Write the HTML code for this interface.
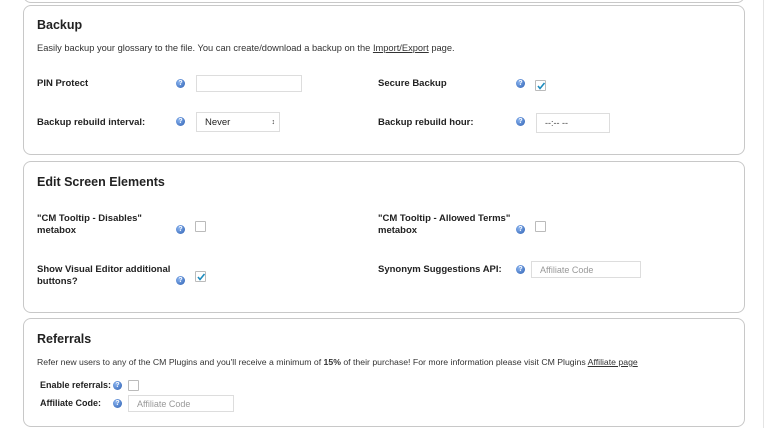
<!DOCTYPE html>
<html><head><style>
body{margin:0;width:768px;height:428px;background:#fff;font-family:"Liberation Sans",Arial,sans-serif;color:#222;position:relative;overflow:hidden}
.p{position:absolute;left:23px;width:722px;background:#fff;border:1px solid #c8c8c8;border-radius:8px;box-sizing:border-box}
.a{position:absolute;white-space:nowrap}
h3{position:absolute;margin:0;font-size:12.5px;font-weight:bold;left:13px}
.l{font-size:9.5px;font-weight:bold}
.t{font-size:9.3px;color:#333}
.q{position:absolute;width:9px;height:9px;border-radius:50%;background:radial-gradient(circle at 35% 35%,#8ab4f0,#2a5db0);color:#fff;font-size:7px;font-weight:bold;text-align:center;line-height:9px}
.in{position:absolute;border:1px solid #ddd;background:#fff;box-sizing:border-box;font-size:9px;color:#999;padding-left:8px;line-height:17px}
.cb{position:absolute;width:11px;height:11px;border:1px solid #bbb;background:#fff;box-sizing:border-box;border-radius:1px}
u{text-decoration:underline}
</style></head><body>
<div style="position:absolute;left:763px;top:0;width:1px;height:428px;background:#e4e4e4"></div>
<div class="p" style="top:-20px;height:23px"></div>

<div class="p" style="top:5px;height:150px">
<h3 style="top:12px">Backup</h3>
<div class="a t" style="left:13px;top:37px">Easily backup your glossary to the file. You can create/download a backup on the <u>Import/Export</u> page.</div>
<div class="a l" style="left:13px;top:72px">PIN Protect</div>
<div class="q" style="left:152px;top:73px">?</div>
<div class="in" style="left:172px;top:69px;width:106px;height:17px"></div>
<div class="a l" style="left:354px;top:72px">Secure Backup</div>
<div class="q" style="left:492px;top:73px">?</div>
<div class="cb" style="left:511px;top:74px"><svg width="10" height="10" style="position:absolute;left:0;top:0"><path d="M2 5 L4 7.5 L8.5 2" stroke="#1e8cbe" stroke-width="1.6" fill="none"/></svg></div>
<div class="a l" style="left:13px;top:111px">Backup rebuild interval:</div>
<div class="q" style="left:152px;top:111px">?</div>
<div class="in" style="left:172px;top:106px;width:84px;height:20px;color:#222;line-height:19px;font-size:9.5px">Never<span style="position:absolute;right:4px;top:0;font-size:7px">&#x2195;</span></div>
<div class="a l" style="left:354px;top:111px">Backup rebuild hour:</div>
<div class="q" style="left:492px;top:111px">?</div>
<div class="in" style="left:512px;top:107px;width:74px;height:20px;color:#444;line-height:19px">--:-- --</div>
</div>

<div class="p" style="top:161px;height:152px">
<h3 style="top:13px">Edit Screen Elements</h3>
<div class="a l" style="left:13px;top:51px;line-height:12px">"CM Tooltip - Disables"<br>metabox</div>
<div class="q" style="left:152px;top:63px">?</div>
<div class="cb" style="left:171px;top:59px"></div>
<div class="a l" style="left:354px;top:51px;line-height:12px">"CM Tooltip - Allowed Terms"<br>metabox</div>
<div class="q" style="left:492px;top:63px">?</div>
<div class="cb" style="left:511px;top:59px"></div>
<div class="a l" style="left:13px;top:102px;line-height:12px">Show Visual Editor additional<br>buttons?</div>
<div class="q" style="left:152px;top:114px">?</div>
<div class="cb" style="left:171px;top:109px"><svg width="10" height="10" style="position:absolute;left:0;top:0"><path d="M2 5 L4 7.5 L8.5 2" stroke="#1e8cbe" stroke-width="1.6" fill="none"/></svg></div>
<div class="a l" style="left:354px;top:102px">Synonym Suggestions API:</div>
<div class="q" style="left:492px;top:103px">?</div>
<div class="in" style="left:507px;top:99px;width:110px;height:17px">Affiliate Code</div>
</div>

<div class="p" style="top:318px;height:109px">
<h3 style="top:13px">Referrals</h3>
<div class="a t" style="left:13px;top:38px;font-size:8.7px">Refer new users to any of the CM Plugins and you'll receive a minimum of <b>15%</b> of their purchase! For more information please visit CM Plugins <u>Affiliate page</u></div>
<div class="a l" style="left:16px;top:61px;font-size:9px">Enable referrals:</div>
<div class="q" style="left:89px;top:62px">?</div>
<div class="cb" style="left:104px;top:61px"></div>
<div class="a l" style="left:16px;top:79px;font-size:9px">Affiliate Code:</div>
<div class="q" style="left:89px;top:80px">?</div>
<div class="in" style="left:104px;top:76px;width:106px;height:17px">Affiliate Code</div>
</div>
</body></html>
